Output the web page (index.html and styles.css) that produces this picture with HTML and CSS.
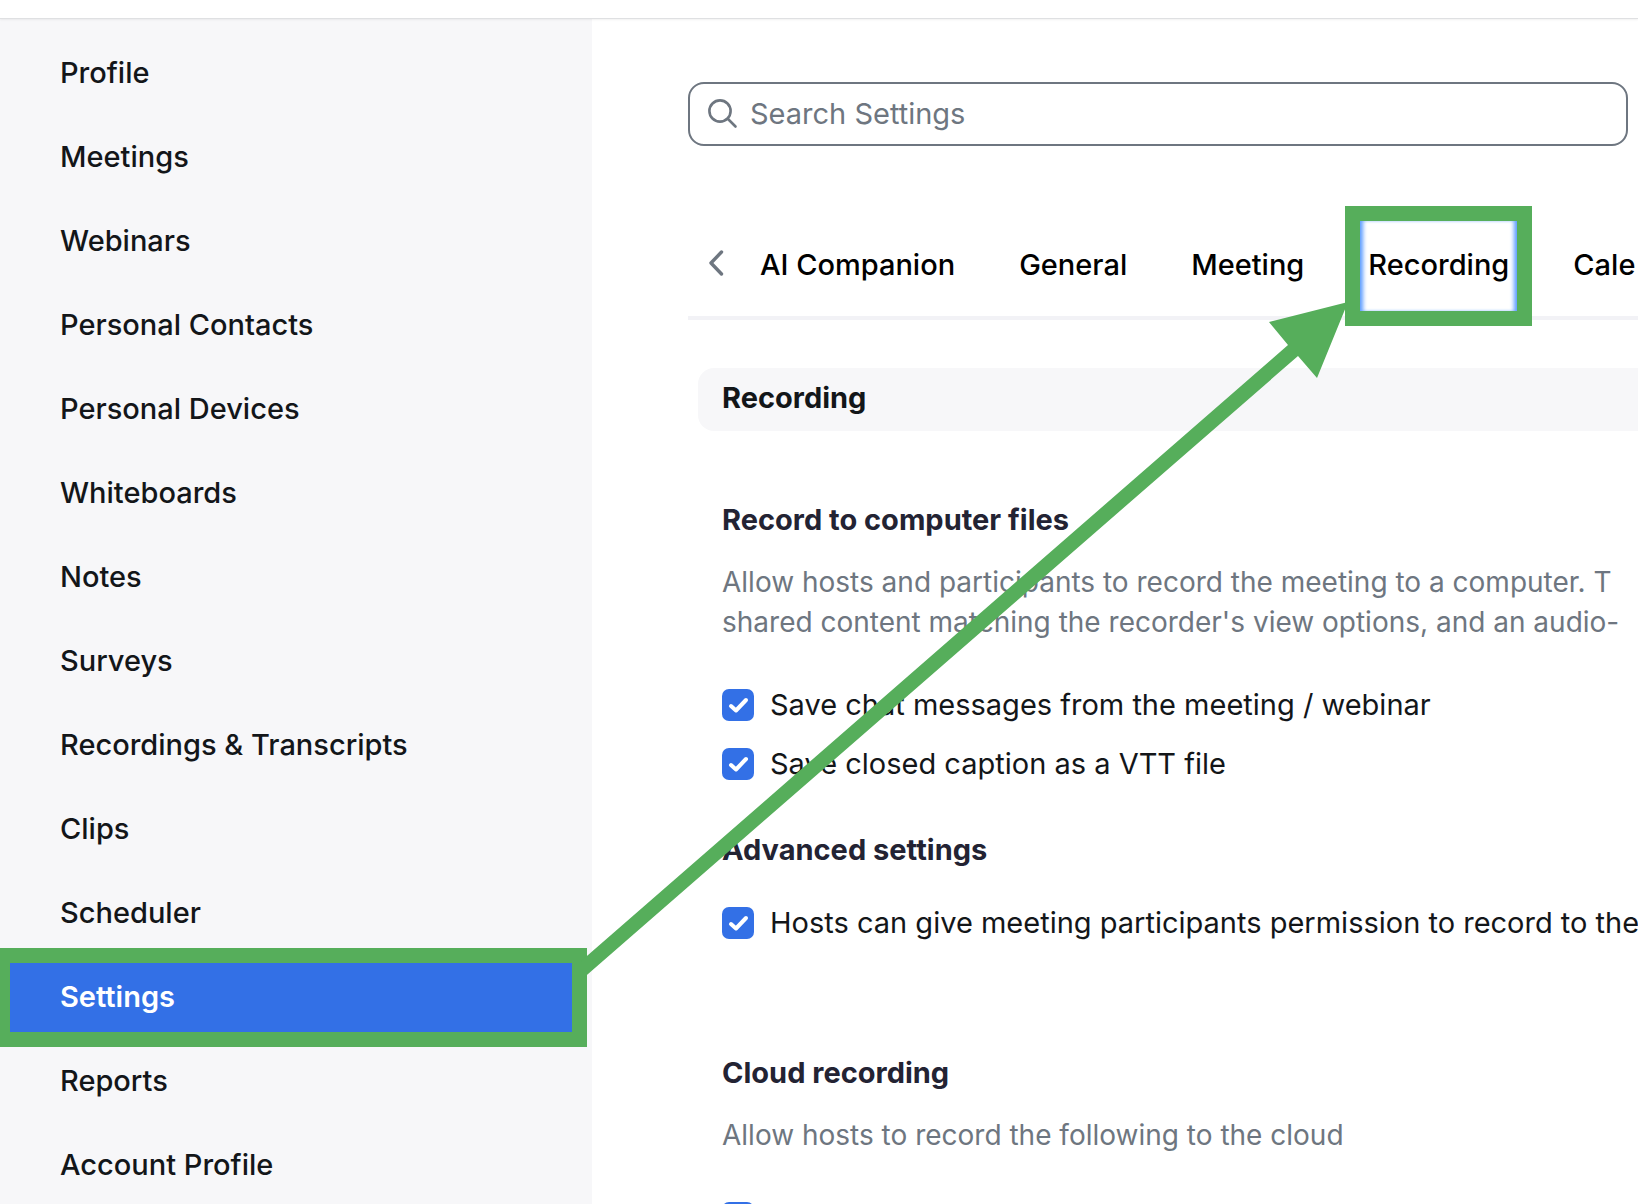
FILE: index.html
```html
<!DOCTYPE html>
<html lang="en">
<head>
    <meta charset="UTF-8">
    <meta name="viewport" content="width=device-width, initial-scale=1.0">
    <title>Settings - Recording</title>
    <link rel="stylesheet" href="styles.css">
</head>
<body>
    <header class="topbar"></header>
    <div class="layout">
        <nav class="sidebar">
            <a href="#">Profile</a>
            <a href="#">Meetings</a>
            <a href="#">Webinars</a>
            <a href="#">Personal Contacts</a>
            <a href="#">Personal Devices</a>
            <a href="#">Whiteboards</a>
            <a href="#">Notes</a>
            <a href="#">Surveys</a>
            <a href="#">Recordings &amp; Transcripts</a>
            <a href="#">Clips</a>
            <a href="#">Scheduler</a>
            <a href="#" class="active">Settings</a>
            <a href="#">Reports</a>
            <a href="#">Account Profile</a>
        </nav>
        <main class="content">
            <div class="search">
                <svg class="search-icon" width="30" height="30" viewBox="0 0 30 30" fill="none" stroke="#6e7680" stroke-width="2.6" stroke-linecap="round" aria-hidden="true">
                    <circle cx="12" cy="12" r="10.6"/>
                    <path d="M20 20l7.5 7.5"/>
                </svg>
                <input type="text" placeholder="Search Settings" aria-label="Search Settings">
            </div>
            <div class="tabs">
                <button class="prev" aria-label="Previous tabs">
                    <svg width="16" height="26" viewBox="0 0 16 26" fill="none" stroke="#6e7680" stroke-width="3.4" stroke-linecap="round" stroke-linejoin="round">
                        <path d="M13.5 2L3 13l10.5 11"/>
                    </svg>
                </button>
                <button>AI Companion</button>
                <button>General</button>
                <button>Meeting</button>
                <button class="active">Recording</button>
                <button>Cale</button>
            </div>
            <h2 class="group-title">Recording</h2>
            <section class="setting">
                <h3>Record to computer files</h3>
                <p>Allow hosts and participants to record the meeting to a computer. T<br>shared content matching the recorder's view options, and an audio-</p>
                <div class="options">
                    <label><input type="checkbox" checked>Save chat messages from the meeting / webinar</label>
                    <label><input type="checkbox" checked>Save closed caption as a VTT file</label>
                </div>
                <h4>Advanced settings</h4>
                <div class="options">
                    <label><input type="checkbox" checked>Hosts can give meeting participants permission to record to the</label>
                </div>
            </section>
            <section class="setting">
                <h3>Cloud recording</h3>
                <p>Allow hosts to record the following to the cloud</p>
                <div class="options">
                    <label><input type="checkbox" checked aria-label="Cloud recording option"></label>
                </div>
            </section>
        </main>
    </div>
    <!-- arrow from the Settings link to the Recording tab -->
    <svg class="arrow" width="768" height="690" viewBox="0 0 768 690" fill="#56ae5b" aria-hidden="true">
        <path d="M0 662L708 45L689 22L768 2L737 78L718 56L0 681z"/>
    </svg>
</body>
</html>
```

FILE: styles.css
```css
* {
    box-sizing: border-box;
}
body {
    margin: 0;
    height: 100vh;
    overflow: hidden;
    position: relative;
    font-family: Inter, "Liberation Sans", sans-serif;
    font-size: 29px;
    line-height: 40px;
    color: #131619;
    background: #fff;
}
.topbar {
    height: 19px;
    border-bottom: 1px solid #dfe0e2;
    box-shadow: 0 1px 2px rgba(0, 0, 0, 0.06);
    position: relative;
}
.layout {
    display: flex;
    align-items: stretch;
    height: 100%;
}
.sidebar {
    flex: 0 0 592px;
    padding-top: 12px;
    background: #f7f7f9;
}
.sidebar a {
    display: block;
    padding: 22px 60px;
    color: #131619;
    font-weight: 500;
    text-decoration: none;
}
.sidebar a.active {
    position: relative;
    z-index: 0;
    color: #fff;
    font-weight: 600;
}
/* green frame round the selected link */
.sidebar a.active::before {
    content: "";
    position: absolute;
    z-index: -1;
    inset: -7px 5px -8px 0;
    border: 15px solid #56ae5b;
    border-left-width: 10px;
    background: #3370e6;
}
.content {
    flex: 1;
    min-width: 0;
    padding: 63px 0 0 96px;
    white-space: nowrap;
}
.search {
    display: flex;
    align-items: center;
    gap: 12px;
    height: 64px;
    margin-right: 10px;
    padding: 0 18px;
    border: 2px solid #6e7680;
    border-radius: 16px;
}
.search-icon {
    flex: none;
}
.search input {
    flex: 1;
    padding: 0;
    border: 0;
    outline: 0;
    font: inherit;
    background: none;
}
.search input::placeholder {
    color: #6e7680;
    opacity: 1;
}
.tabs {
    display: flex;
    gap: 64px;
    margin-top: 64px;
    height: 110px;
    border-bottom: 4px solid #f2f2f6;
}
.tabs button {
    flex: none;
    padding: 4px 0 0;
    border: 0;
    font: inherit;
    font-weight: 500;
    color: #000;
    background: none;
    cursor: pointer;
}
.tabs .prev {
    display: flex;
    align-items: center;
    margin: 0 -28px 0 20px;
    padding: 0;
}
.tabs .active {
    position: relative;
}
.tabs .active::after {
    content: "";
    position: absolute;
    inset: -4px -23px -10px;
    border: 15px solid #56ae5b;
    box-shadow: inset 5px 0 4px -2px #5b9bff, inset -5px 0 4px -2px #5b9bff;
}
.group-title {
    margin: 48px 0 0 10px;
    padding: 10px 24px 13px;
    border-radius: 16px 0 0 16px;
    font-size: 29px;
    font-weight: 700;
    background: #f7f7f9;
}
.setting {
    margin: 69px 0 0 34px;
}
.setting + .setting {
    margin-top: 110px;
}
.setting h3,
.setting h4 {
    margin: 0;
    font-size: 29px;
    font-weight: 700;
    color: #232333;
}
.setting p {
    margin: 22px 0 43px;
    font-size: 28px;
    font-optical-sizing: none;
    color: #6e7680;
}
.setting h4 {
    margin: 46px 0 33px;
}
.options {
    display: flex;
    flex-direction: column;
    gap: 19px;
}
.options label {
    display: flex;
    align-items: center;
    gap: 16px;
    min-height: 40px;
}
.options input {
    appearance: none;
    flex: none;
    width: 32px;
    height: 32px;
    margin: 0;
    border-radius: 7px;
    background: #3370e6 url("data:image/svg+xml,%3Csvg xmlns='http://www.w3.org/2000/svg' viewBox='0 0 32 32' fill='none' stroke='white' stroke-width='4' stroke-linecap='round' stroke-linejoin='round'%3E%3Cpath d='M9 17l5 4.500L24 11'/%3E%3C/svg%3E");
}
.arrow {
    position: absolute;
    left: 580px;
    top: 300px;
    pointer-events: none;
}
```
